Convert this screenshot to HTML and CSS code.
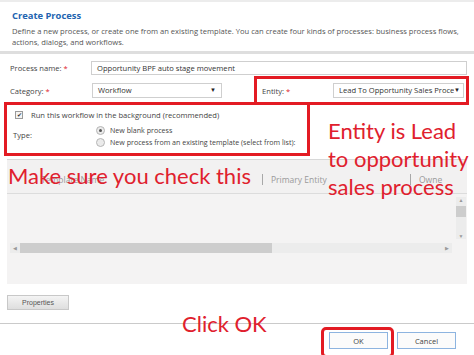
FILE: index.html
```html
<!DOCTYPE html>
<html>
<head>
  <title>Create Process</title>
<link rel="stylesheet" href="styles.css">
</head>
<body>
  <div class="dialog">
    <div class="head">
      <h1>Create Process</h1>
      <p>Define a new process, or create one from an existing template. You can create four kinds of processes: business process flows,<br>actions, dialogs, and workflows.</p>
    </div>

    <div class="form">
      <div class="row row-name">
        <span class="lbl">Process name: <span class="req">*</span></span>
        <div class="field name-field">Opportunity BPF auto stage movement</div>
      </div>
      <div class="row row-cat">
        <span class="lbl">Category: <span class="req">*</span></span>
        <div class="field sel cat-sel"><span>Workflow</span><span class="arrow">&#9660;</span></div>
        <div class="entity-box">
          <span class="lbl ent-lbl">Entity: <span class="req">*</span></span>
          <div class="field sel ent-sel"><span class="clip">Lead To Opportunity Sales Process</span><span class="arrow">&#9660;</span></div>
        </div>
      </div>
      <div class="opt-box">
        <div class="check-row">
          <span class="chk">&#10004;</span>
          <span>Run this workflow in the background (recommended)</span>
        </div>
        <div class="type-row">
          <span class="lbl">Type:</span>
          <div class="radios">
            <div class="radio-row"><span class="radio on"></span>New blank process</div>
            <div class="radio-row"><span class="radio"></span>New process from an existing template (select from list):</div>
          </div>
        </div>
      </div>
    </div>

    <div class="grid">
      <div class="grid-head">
        <span class="col col-name">Template Name</span>
        <span class="col col-ent">Primary Entity</span>
        <span class="col col-own">Owne</span>
      </div>
      <div class="grid-body">
        <div class="vscroll">
          <span class="sarrow">&#9650;</span>
          <span class="vthumb"></span>
          <span class="vgap"></span>
          <span class="sarrow">&#9660;</span>
        </div>
        <div class="hscroll">
          <span class="sarrow">&#9664;</span>
          <span class="hthumb"></span>
          <span class="hgap"></span>
          <span class="sarrow">&#9654;</span>
        </div>
      </div>
    </div>

    <div class="props">
      <button class="btn-props">Properties</button>
    </div>

    <div class="foot">
      <div class="ok-ring"><button class="btn ok">OK</button></div>
      <button class="btn cancel">Cancel</button>
    </div>

    <div class="note note-check">Make sure you check this</div>
    <div class="note note-entity">Entity is Lead<br>to opportunity<br>sales process</div>
    <div class="note note-ok">Click OK</div>
  </div>
</body>
</html>
```

FILE: styles.css
```css
body {
  margin: 0;
  font-family: "Open Sans", Arial, sans-serif;
  background-color: #fff;
  color: #444;
}
.dialog {
  position: relative;
  width: 474px;
  height: 355px;
  overflow: hidden;
  border-top: 2px solid #ececec;
  box-sizing: border-box;
}
.head {
  height: 52px;
  padding: 7px 12px 0 12px;
  box-sizing: border-box;
  border-bottom: 3px solid #dedede;
}
.head h1 {
  margin: 0;
  font-size: 9.4px;
  font-weight: bold;
  color: #2264b0;
  line-height: 13px;
}
.head p {
  margin: 4px 0 0 0;
  font-size: 7.6px;
  line-height: 11px;
  color: #555;
  white-space: nowrap;
}
.row {
  display: flex;
  align-items: center;
}
.lbl {
  font-size: 7.6px;
  color: #444;
}
.req {
  color: #e0202a;
}
.row-name {
  margin-top: 7px;
  padding-left: 10px;
}
.row-name .lbl {
  width: 81px;
}
.field {
  height: 14px;
  border: 1px solid #cfcfcf;
  box-sizing: border-box;
  font-size: 7.6px;
  line-height: 12px;
  padding: 0 5px;
  color: #333;
  background-color: #fff;
}
.name-field {
  width: 376px;
}
.row-cat {
  margin-top: 1px;
  padding-left: 10px;
  height: 29px;
}
.row-cat > .lbl {
  width: 82px;
}
.sel {
  display: flex;
  justify-content: space-between;
  height: 15px;
  line-height: 13px;
}
.arrow {
  font-size: 6px;
  color: #222;
}
.cat-sel {
  width: 130px;
}
.entity-box {
  margin-left: 32px;
  width: 215px;
  height: 29px;
  border: 3px solid #e31b23;
  box-sizing: border-box;
  display: flex;
  align-items: center;
  padding-left: 5px;
}
.ent-lbl {
  width: 71px;
}
.ent-sel {
  width: 131px;
  padding-right: 3px;
}
.clip {
  overflow: hidden;
  white-space: nowrap;
  width: 115px;
}
.opt-box {
  margin: -3px 0 0 4px;
  width: 306px;
  height: 54px;
  border: 3px solid #e31b23;
  box-sizing: border-box;
  padding: 4px 0 0 6px;
  font-size: 7.6px;
}
.check-row {
  display: flex;
  align-items: center;
  height: 12px;
}
.chk {
  width: 6px;
  height: 6px;
  border: 1px solid #9a9a9a;
  font-size: 6px;
  line-height: 6px;
  text-align: center;
  color: #333;
  margin: 0 8px 0 2px;
  background-color: #f4f4f4;
}
.type-row {
  display: flex;
  margin-top: 3px;
}
.type-row .lbl {
  width: 83px;
  padding-top: 6px;
}
.radios {
  font-size: 7.1px;
  white-space: nowrap;
}
.radio-row {
  display: flex;
  align-items: center;
  height: 12px;
  color: #444;
}
.radio {
  width: 7px;
  height: 7px;
  border-radius: 50%;
  border: 1px solid #b5b5b5;
  background-color: #ebebeb;
  margin-right: 5px;
  position: relative;
}
.radio.on::after {
  content: "";
  position: absolute;
  left: 2px;
  top: 2px;
  width: 3px;
  height: 3px;
  border-radius: 50%;
  background-color: #555;
}
.grid {
  margin: 3px 7px 0 7px;
  height: 124px;
  border-top: 1px solid #d8d8d8;
  background-color: #f4f3f3;
}
.grid-head {
  height: 33px;
  border-bottom: 1px solid #dcdcdc;
  background-color: #f2f1f1;
  font-size: 8.5px;
  color: #9a9a9a;
  position: relative;
}
.col {
  position: absolute;
  top: 14px;
}
.col-name { left: 34px; }
.col-ent {
  left: 255px;
  border-left: 1px solid #a8a8a8;
  padding-left: 8px;
}
.col-own {
  left: 403px;
  border-left: 1px solid #a8a8a8;
  padding-left: 8px;
}
.grid-body {
  position: relative;
  height: 90px;
}
.sarrow {
  font-size: 5px;
  color: #999;
  text-align: center;
}
.vscroll {
  position: absolute;
  right: 1px;
  top: 3px;
  width: 10px;
  height: 42px;
  background-color: #ececec;
  display: flex;
  flex-direction: column;
  align-items: center;
}
.vthumb {
  width: 10px;
  height: 11px;
  background-color: #cdcdcd;
  margin-top: 3px;
}
.vgap { flex: 1; }
.hscroll {
  position: absolute;
  left: 3px;
  top: 49px;
  width: 442px;
  height: 10px;
  background-color: #ececec;
  display: flex;
  align-items: center;
}
.hscroll .sarrow {
  width: 10px;
}
.hthumb {
  width: 252px;
  height: 10px;
  background-color: #cdcdcd;
}
.hgap { flex: 1; }
.props {
  padding: 11px 0 0 7px;
  height: 28px;
  box-sizing: border-box;
}
.btn-props {
  display: block;
  width: 62px;
  height: 15px;
  border: 1px solid #c8c8c8;
  background: linear-gradient(#f4f4f4, #dedede);
  font-family: "Liberation Sans", Arial, sans-serif;
  font-size: 7px;
  color: #555;
  padding: 0;
}
.foot {
  margin-top: 11px;
  border-top: 1px solid #cacaca;
  display: flex;
  justify-content: flex-end;
  padding-right: 18px;
  padding-top: 3px;
}
.ok-ring {
  border: 3px solid #e31b23;
  border-radius: 5px;
  padding: 2px 3px 6px 5px;
  margin-right: 3px;
}
.btn {
  display: block;
  width: 59px;
  height: 17px;
  border: 1px solid #8db4e0;
  background-color: #fbfbfb;
  font-family: "Open Sans", Arial, sans-serif;
  font-size: 7.5px;
  color: #444;
  padding: 0;
}
.cancel {
  margin-top: 5px;
  width: 59px;
}
.note {
  position: absolute;
  font-family: Lato, "Open Sans", sans-serif;
  color: #e0202d;
  font-size: 22px;
  line-height: 28px;
}
.note-check {
  left: 8px;
  top: 160px;
}
.note-entity {
  left: 328px;
  top: 115px;
}
.note-ok {
  left: 182px;
  top: 308px;
}
```
